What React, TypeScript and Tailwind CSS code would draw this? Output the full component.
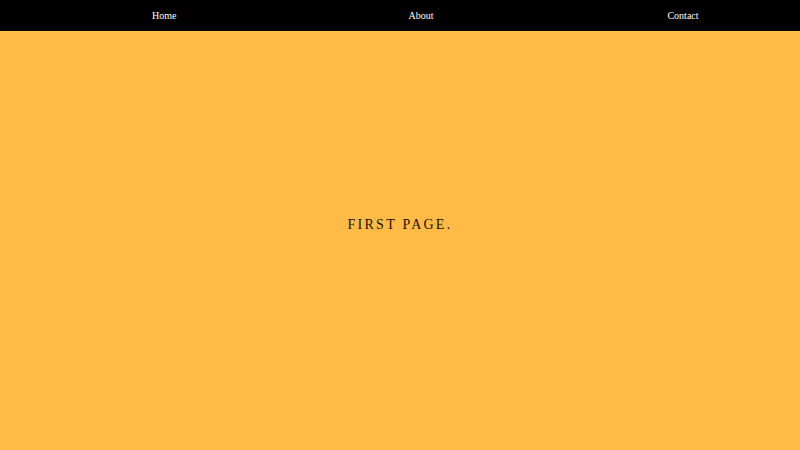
const links = [
    { label: 'Home', offset: 'ml-[152px]' },
    { label: 'About', offset: 'ml-[232px]' },
    { label: 'Contact', offset: 'ml-[234px]' },
];

export default function App() {
    return (
        <div className="relative h-[450px] w-full overflow-hidden bg-[#ffbb46] font-['Liberation_Serif',serif]">
            {/* Top navigation bar */}
            <nav className="absolute inset-x-0 top-0 flex h-[31px] items-center bg-black">
                {links.map((link) => (
                    <a
                        key={link.label}
                        href="#"
                        className={`${link.offset} text-[10px] leading-none text-white`}
                    >
                        {link.label}
                    </a>
                ))}
            </nav>

            {/* Hero */}
            <main className="flex h-full items-center justify-center">
                <h1 className="text-[14px] leading-none tracking-[0.16em] text-[#1a1206]">
                    FIRST PAGE.
                </h1>
            </main>
        </div>
    );
}
